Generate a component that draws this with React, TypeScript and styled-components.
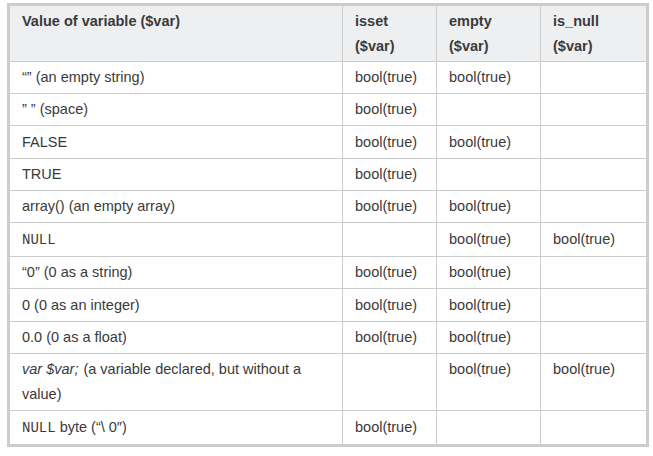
import React from 'react'
import styled, { createGlobalStyle } from 'styled-components'

const GlobalStyle = createGlobalStyle`
  html, body {
    margin: 0;
    padding: 0;
    background: #ffffff;
  }
  body {
    font-family: "Liberation Sans", Arial, sans-serif;
    color: #3a3a3a;
  }
`

const Page = styled.div`
  padding: 3px 0 0 7px;
`

const Table = styled.table`
  width: 642px;
  table-layout: fixed;
  border-collapse: separate;
  border-spacing: 0;
  border: 3px solid #cccccc;
  font-size: 14.5px;
  line-height: 25px;
`

const HeadCell = styled.th<{ $w: number; $last?: boolean }>`
  box-sizing: border-box;
  width: ${p => p.$w}px;
  background: #eeeff1;
  font-weight: bold;
  text-align: left;
  vertical-align: top;
  padding: 2.5px 12px 2px;
  border-bottom: 1px solid #cccccc;
  border-right: ${p => (p.$last ? 'none' : '1px solid #cccccc')};
`

const Cell = styled.td<{ $last?: boolean; $bottom?: boolean }>`
  box-sizing: border-box;
  vertical-align: top;
  padding: 3.3px 12px 3.1px;
  border-bottom: ${p => (p.$bottom ? 'none' : '1px solid #cccccc')};
  border-right: ${p => (p.$last ? 'none' : '1px solid #cccccc')};
`

const Mono = styled.code`
  font-family: "Liberation Mono", "Courier New", monospace;
  font-size: 14px;
`

const Italic = styled.em`
  padding-right: 1px;
`

type Row = {
  value: React.ReactNode
  isset: boolean
  empty: boolean
  isNull: boolean
}

const rows: Row[] = [
  { value: '“” (an empty string)', isset: true, empty: true, isNull: false },
  { value: '” ” (space)', isset: true, empty: false, isNull: false },
  { value: 'FALSE', isset: true, empty: true, isNull: false },
  { value: 'TRUE', isset: true, empty: false, isNull: false },
  { value: 'array() (an empty array)', isset: true, empty: true, isNull: false },
  { value: <Mono>NULL</Mono>, isset: false, empty: true, isNull: true },
  { value: '“0” (0 as a string)', isset: true, empty: true, isNull: false },
  { value: '0 (0 as an integer)', isset: true, empty: true, isNull: false },
  { value: '0.0 (0 as a float)', isset: true, empty: true, isNull: false },
  {
    value: (
      <>
        <Italic>var $var;</Italic> (a variable declared, but without a value)
      </>
    ),
    isset: false,
    empty: true,
    isNull: true,
  },
  {
    value: (
      <>
        <Mono>NULL</Mono> byte (“\ 0″)
      </>
    ),
    isset: true,
    empty: false,
    isNull: false,
  },
]

const mark = (v: boolean) => (v ? 'bool(true)' : '')

export default function App() {
  return (
    <Page>
      <GlobalStyle />
      <Table>
        <thead>
          <tr>
            <HeadCell $w={333}>Value of variable ($var)</HeadCell>
            <HeadCell $w={94}>isset ($var)</HeadCell>
            <HeadCell $w={104}>empty ($var)</HeadCell>
            <HeadCell $w={105} $last>
              is_null ($var)
            </HeadCell>
          </tr>
        </thead>
        <tbody>
          {rows.map((r, i) => {
            const bottom = i === rows.length - 1
            return (
              <tr key={i}>
                <Cell $bottom={bottom}>{r.value}</Cell>
                <Cell $bottom={bottom}>{mark(r.isset)}</Cell>
                <Cell $bottom={bottom}>{mark(r.empty)}</Cell>
                <Cell $bottom={bottom} $last>
                  {mark(r.isNull)}
                </Cell>
              </tr>
            )
          })}
        </tbody>
      </Table>
    </Page>
  )
}
